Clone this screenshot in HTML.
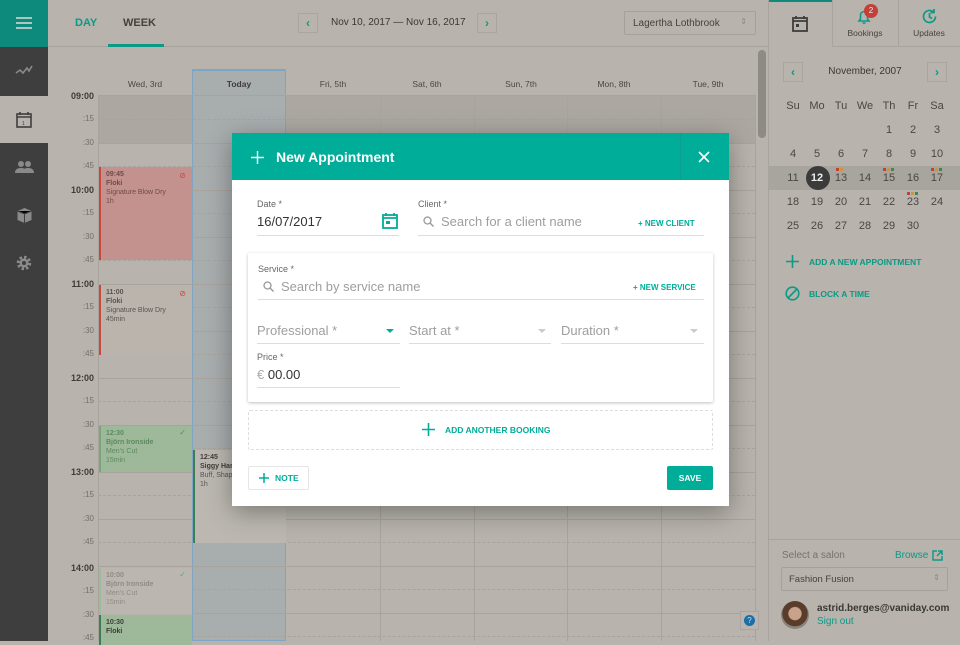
<!DOCTYPE html>
<html><head><meta charset="utf-8"><style>
*{box-sizing:border-box;margin:0;padding:0}
body{width:960px;height:641px;overflow:hidden;background:#b8b3ac;font-family:"Liberation Sans",sans-serif;position:relative;color:#333}
.a{position:absolute}
.hl{position:absolute;left:98px;width:657px;height:0;border-top:1px solid #a8a39d}
.dl{position:absolute;left:98px;width:657px;height:0;border-top:1px dashed #a8a39d}
.vl{position:absolute;top:95px;bottom:0;width:0;border-left:1px solid #a8a39d}
.tl{position:absolute;left:50px;width:44px;text-align:right;font-size:8px;color:#757069;line-height:10px}
.tl.b{font-weight:bold;color:#3f3c38;font-size:9px}
.dh{position:absolute;top:79px;width:94px;text-align:center;font-size:8.5px;color:#4a4743}
.ev{position:absolute;font-size:7px;line-height:9px;padding:3px 5px;color:#6b4c49}
.ev b{display:block}
.cal{position:absolute;width:24px;text-align:center;font-size:11px;color:#4a4743}
.teal{color:#00a993}
.lbl{position:absolute;font-size:9px;color:#666}
.ul{position:absolute;height:0;border-top:1px solid #ddd}
.ph{position:absolute;font-size:13px;color:#9e9e9e}
</style></head><body>
<div class="a" style="left:0;top:0;width:48px;height:641px;background:#3e3e3e"></div>
<div class="a" style="left:0;top:0;width:48px;height:47px;background:#0d8a7b"></div>
<svg class="a" style="left:16px;top:17px" width="16" height="12"><path d="M0 1h16M0 6h16M0 11h16" stroke="#ddd" stroke-width="1.6"/></svg>
<svg class="a" style="left:15px;top:64px" width="19" height="12"><path d="M1 9l4-3 3 3 4-5 2 3 3-5" stroke="#8a8a8a" stroke-width="1.6" fill="none"/></svg>
<div class="a" style="left:0;top:96px;width:48px;height:47px;background:#b8b3ac"></div>
<svg class="a" style="left:16px;top:111px" width="16" height="17"><rect x="1" y="3" width="14" height="13" fill="none" stroke="#3e3e3e" stroke-width="1.6"/><path d="M1 6h14M4 1v3M12 1v3" stroke="#3e3e3e" stroke-width="1.6"/><text x="6" y="14" font-size="5" fill="#3e3e3e">1</text></svg>
<svg class="a" style="left:15px;top:160px" width="19" height="14"><circle cx="6" cy="4" r="3" fill="#8a8a8a"/><circle cx="13" cy="4" r="3" fill="#8a8a8a"/><path d="M0 13c0-4 3-5 6-5s6 1 6 5zM8 13c0-4 2-5 5-5s6 1 6 5z" fill="#8a8a8a"/></svg>
<svg class="a" style="left:16px;top:207px" width="17" height="17"><path d="M8.5 1l7 3v9l-7 3-7-3V4z" fill="#8a8a8a"/><path d="M1.5 4l7 3 7-3M8.5 7v9" stroke="#3e3e3e" stroke-width="1"/></svg>
<svg class="a" style="left:16px;top:255px" width="16" height="16"><circle cx="8" cy="8" r="5.5" fill="none" stroke="#8a8a8a" stroke-width="3.5" stroke-dasharray="2.3 2"/><circle cx="8" cy="8" r="4.5" fill="#8a8a8a"/><circle cx="8" cy="8" r="2" fill="#3e3e3e"/></svg>
<div class="a" style="left:48px;top:0;width:720px;height:47px;border-bottom:1px solid #a8a39d"></div>
<div class="a teal" style="left:75px;top:17px;font-size:11px;font-weight:bold;color:#0c9986">DAY</div>
<div class="a" style="left:123px;top:17px;font-size:11px;font-weight:bold;color:#45423e">WEEK</div>
<div class="a" style="left:108px;top:44px;width:56px;height:3px;background:#0c9986"></div>
<div class="a" style="left:298px;top:13px;width:20px;height:20px;border:1px solid #aaa59f;color:#0c9986;font-size:12px;text-align:center;line-height:18px;font-weight:bold">‹</div>
<div class="a" style="left:331px;top:17px;font-size:10px;color:#3a3835;white-space:nowrap">Nov 10, 2017 — Nov 16, 2017</div>
<div class="a" style="left:477px;top:13px;width:20px;height:20px;border:1px solid #aaa59f;color:#0c9986;font-size:12px;text-align:center;line-height:18px;font-weight:bold">›</div>
<div class="a" style="left:624px;top:11px;width:132px;height:24px;border:1px solid #a4a09a;border-radius:2px;font-size:10px;color:#45423e;padding:6px 8px">Lagertha Lothbrook<span style="position:absolute;right:8px;top:5px;font-size:8px;color:#888">⇕</span></div>
<div class="a" style="left:98px;top:96px;width:657px;height:47px;background:#aca7a1"></div>
<div class="a" style="left:192px;top:69px;width:94px;height:572px;background:#a8adae;border:1px solid #7ea6c4;border-top:2px solid #7ea6c4"></div>
<div class="dh" style="left:98px">Wed, 3rd</div>
<div class="dh" style="left:192px;font-weight:bold;color:#3f3c38">Today</div>
<div class="dh" style="left:286px">Fri, 5th</div>
<div class="dh" style="left:380px">Sat, 6th</div>
<div class="dh" style="left:474px">Sun, 7th</div>
<div class="dh" style="left:567px">Mon, 8th</div>
<div class="dh" style="left:661px">Tue, 9th</div>
<div class="vl" style="left:98px"></div><div class="vl" style="left:380px"></div><div class="vl" style="left:474px"></div><div class="vl" style="left:567px"></div><div class="vl" style="left:661px"></div><div class="vl" style="left:755px"></div>
<div class="hl" style="top:95px"></div><div class="dl" style="top:119px"></div><div class="hl" style="top:143px"></div><div class="dl" style="top:166px"></div>
<div class="hl" style="top:190px"></div><div class="dl" style="top:213px"></div><div class="hl" style="top:237px"></div><div class="dl" style="top:260px"></div>
<div class="hl" style="top:284px"></div><div class="dl" style="top:307px"></div><div class="hl" style="top:331px"></div><div class="dl" style="top:354px"></div>
<div class="hl" style="top:378px"></div><div class="dl" style="top:401px"></div><div class="hl" style="top:425px"></div><div class="dl" style="top:448px"></div>
<div class="hl" style="top:472px"></div><div class="dl" style="top:495px"></div><div class="hl" style="top:519px"></div><div class="dl" style="top:542px"></div>
<div class="hl" style="top:566px"></div><div class="dl" style="top:589px"></div><div class="hl" style="top:613px"></div><div class="dl" style="top:636px"></div>
<div class="tl b" style="top:91px">09:00</div><div class="tl" style="top:114px">:15</div><div class="tl" style="top:138px">:30</div><div class="tl" style="top:161px">:45</div>
<div class="tl b" style="top:185px">10:00</div><div class="tl" style="top:208px">:15</div><div class="tl" style="top:232px">:30</div><div class="tl" style="top:255px">:45</div>
<div class="tl b" style="top:279px">11:00</div><div class="tl" style="top:302px">:15</div><div class="tl" style="top:326px">:30</div><div class="tl" style="top:349px">:45</div>
<div class="tl b" style="top:373px">12:00</div><div class="tl" style="top:396px">:15</div><div class="tl" style="top:420px">:30</div><div class="tl" style="top:443px">:45</div>
<div class="tl b" style="top:467px">13:00</div><div class="tl" style="top:490px">:15</div><div class="tl" style="top:514px">:30</div><div class="tl" style="top:537px">:45</div>
<div class="tl b" style="top:563px">14:00</div><div class="tl" style="top:586px">:15</div><div class="tl" style="top:610px">:30</div><div class="tl" style="top:633px">:45</div>
<div class="ev" style="left:99px;top:167px;width:93px;height:93px;background:#c4928e;border-left:2px solid #c7483f"><b>09:45</b><b>Floki</b>Signature Blow Dry<br>1h<span style="position:absolute;right:6px;top:4px;color:#c7483f;font-size:8px">⊘</span></div>
<div class="ev" style="left:99px;top:285px;width:93px;height:70px;background:#bab4ad;border-left:2px solid #c7483f;color:#5a5450"><b>11:00</b><b>Floki</b>Signature Blow Dry<br>45min<span style="position:absolute;right:6px;top:4px;color:#c7483f;font-size:8px">⊘</span></div>
<div class="ev" style="left:99px;top:426px;width:93px;height:46px;background:#9db99a;border-left:2px solid #7aa57a;color:#5c8a5c"><b>12:30</b><b>Björn Ironside</b>Men's Cut<br>15min<span style="position:absolute;right:6px;top:2px;font-size:8px">✓</span></div>
<div class="ev" style="left:193px;top:450px;width:93px;height:93px;background:#bcb8b1;border-left:2px solid #3d7d56;color:#5a5652"><b style="color:#3f3c38">12:45</b><b style="color:#3f3c38">Siggy Haraldsdottir</b>Buff, Shape<br>1h</div>
<div class="ev" style="left:99px;top:568px;width:93px;height:46px;background:#bbb7b0;border-left:2px solid #9bbb9b;color:#8f8b86"><b>10:00</b><b>Björn Ironside</b>Men's Cut<br>15min<span style="position:absolute;right:6px;top:2px;color:#6a9f6a;font-size:8px">✓</span></div>
<div class="ev" style="left:99px;top:615px;width:93px;height:30px;background:#9db99a;border-left:2px solid #3d7d56;color:#3f3c38"><b>10:30</b><b>Floki</b></div>
<div class="a" style="left:758px;top:50px;width:8px;height:88px;background:#8e8a85;border-radius:4px"></div>
<div class="a" style="left:740px;top:611px;width:19px;height:19px;border:1px solid #aaa59f;background:#bab5ae"><div style="margin:3px;width:11px;height:11px;border-radius:50%;background:#1a6fa8;color:#ddd;font-size:8px;text-align:center;line-height:11px">?</div></div>
<div class="a" style="left:768px;top:0;width:192px;height:641px;border-left:1px solid #a8a39d;background:#b8b3ac"></div>
<div class="a" style="left:769px;top:0;width:63px;height:2px;background:#0d8a7b"></div>
<div class="a" style="left:832px;top:0;width:128px;height:47px;border-left:1px solid #a8a39d;border-bottom:1px solid #a8a39d"></div>
<div class="a" style="left:898px;top:0;width:1px;height:47px;background:#a8a39d"></div>
<svg class="a" style="left:792px;top:15px" width="16" height="17"><rect x="1" y="3" width="14" height="13" fill="none" stroke="#3e3e3e" stroke-width="1.8"/><path d="M1 6h14M4 1v3M12 1v3" stroke="#3e3e3e" stroke-width="1.8"/><rect x="4" y="9" width="3" height="3" fill="#3e3e3e"/></svg>
<svg class="a" style="left:857px;top:9px" width="14" height="16"><path d="M2 12h10l-1.5-2V6a3.5 3.5 0 0 0-7 0v4zM5.5 14h3" stroke="#0c9986" stroke-width="1.6" fill="none"/></svg>
<div class="a" style="left:864px;top:4px;width:14px;height:14px;border-radius:50%;background:#c2403a;color:#eee;font-size:8px;text-align:center;line-height:14px">2</div>
<div class="a" style="left:832px;top:28px;width:66px;text-align:center;font-size:8.5px;color:#45423e">Bookings</div>
<svg class="a" style="left:921px;top:8px" width="17" height="17"><path d="M14.5 8.5a6 6 0 1 1-2-4.5M13 1v3.5H9.5M8.5 5v4l2.5 1.5" stroke="#0c9986" stroke-width="1.7" fill="none"/></svg>
<div class="a" style="left:898px;top:28px;width:62px;text-align:center;font-size:8.5px;color:#45423e">Updates</div>
<div class="a" style="left:783px;top:62px;width:20px;height:20px;border:1px solid #aaa59f;color:#0c9986;text-align:center;line-height:18px;font-weight:bold;font-size:12px">‹</div>
<div class="a" style="left:805px;top:66px;width:120px;text-align:center;font-size:10px;color:#3a3835">November, 2007</div>
<div class="a" style="left:927px;top:62px;width:20px;height:20px;border:1px solid #aaa59f;color:#0c9986;text-align:center;line-height:18px;font-weight:bold;font-size:12px">›</div>
<div class="a" style="left:769px;top:166px;width:191px;height:24px;background:#a8a49e"></div>
<div class="a" style="left:806px;top:166px;width:24px;height:24px;border-radius:50%;background:#3b3b3b"></div>
<div class="a" style="left:781px;top:100px;font-size:11px;color:#6f6b66;word-spacing:0">
<span class="cal" style="left:0">Su</span><span class="cal" style="left:24px">Mo</span><span class="cal" style="left:48px">Tu</span><span class="cal" style="left:72px">We</span><span class="cal" style="left:96px">Th</span><span class="cal" style="left:120px">Fr</span><span class="cal" style="left:144px">Sa</span>
</div>
<div class="a" style="left:781px;top:124px;width:170px;height:120px">
<span class="cal" style="left:96px;top:0">1</span><span class="cal" style="left:120px;top:0">2</span><span class="cal" style="left:144px;top:0">3</span>
<span class="cal" style="left:0;top:24px">4</span><span class="cal" style="left:24px;top:24px">5</span><span class="cal" style="left:48px;top:24px">6</span><span class="cal" style="left:72px;top:24px">7</span><span class="cal" style="left:96px;top:24px">8</span><span class="cal" style="left:120px;top:24px">9</span><span class="cal" style="left:144px;top:24px">10</span>
<span class="cal" style="left:0;top:48px">11</span><span class="cal" style="left:24px;top:48px;color:#eee;font-weight:bold">12</span><span class="cal" style="left:48px;top:48px">13</span><span class="cal" style="left:72px;top:48px">14</span><span class="cal" style="left:96px;top:48px">15</span><span class="cal" style="left:120px;top:48px">16</span><span class="cal" style="left:144px;top:48px">17</span>
<span class="cal" style="left:0;top:72px">18</span><span class="cal" style="left:24px;top:72px">19</span><span class="cal" style="left:48px;top:72px">20</span><span class="cal" style="left:72px;top:72px">21</span><span class="cal" style="left:96px;top:72px">22</span><span class="cal" style="left:120px;top:72px">23</span><span class="cal" style="left:144px;top:72px">24</span>
<span class="cal" style="left:0;top:96px">25</span><span class="cal" style="left:24px;top:96px">26</span><span class="cal" style="left:48px;top:96px">27</span><span class="cal" style="left:72px;top:96px">28</span><span class="cal" style="left:96px;top:96px">29</span><span class="cal" style="left:120px;top:96px">30</span>
</div>
<svg class="a" style="left:836px;top:168px" width="10" height="3"><rect width="3" height="3" fill="#c2403a"/><rect x="4" width="3" height="3" fill="#c9973a"/></svg>
<svg class="a" style="left:883px;top:168px" width="12" height="3"><rect width="3" height="3" fill="#c2403a"/><rect x="4" width="3" height="3" fill="#c9973a"/><rect x="8" width="3" height="3" fill="#3c8a4a"/></svg>
<svg class="a" style="left:931px;top:168px" width="12" height="3"><rect width="3" height="3" fill="#c2403a"/><rect x="4" width="3" height="3" fill="#c9973a"/><rect x="8" width="3" height="3" fill="#3c8a4a"/></svg>
<svg class="a" style="left:907px;top:192px" width="12" height="3"><rect width="3" height="3" fill="#c2403a"/><rect x="4" width="3" height="3" fill="#c9973a"/><rect x="8" width="3" height="3" fill="#3c8a4a"/></svg>
<svg class="a" style="left:786px;top:255px" width="13" height="13"><path d="M6.5 0v13M0 6.5h13" stroke="#0c9986" stroke-width="1.6"/></svg>
<div class="a" style="left:809px;top:257px;font-size:8.5px;font-weight:bold;color:#0c9986">ADD A NEW APPOINTMENT</div>
<svg class="a" style="left:785px;top:286px" width="15" height="15"><circle cx="7.5" cy="7.5" r="6.3" fill="none" stroke="#0c9986" stroke-width="1.6"/><path d="M3 12L12 3" stroke="#0c9986" stroke-width="1.6"/></svg>
<div class="a" style="left:809px;top:289px;font-size:8.5px;font-weight:bold;color:#0c9986">BLOCK A TIME</div>
<div class="a" style="left:769px;top:539px;width:191px;height:1px;background:#a8a39d"></div>
<div class="a" style="left:782px;top:550px;font-size:10px;color:#77726c">Select a salon</div>
<div class="a" style="left:895px;top:550px;font-size:10px;color:#0c9986">Browse</div>
<svg class="a" style="left:932px;top:550px" width="11" height="11"><path d="M5 1H1v9h9V6M6 1h4v4M10 1L5 6" stroke="#0c9986" stroke-width="1.4" fill="none"/></svg>
<div class="a" style="left:781px;top:567px;width:167px;height:24px;border:1px solid #a4a09a;border-radius:2px;font-size:9.5px;color:#45423e;padding:6px 7px">Fashion Fusion<span style="position:absolute;right:7px;top:5px;font-size:8px;color:#888">⇕</span></div>
<div class="a" style="left:781px;top:601px;width:28px;height:28px;border-radius:50%;background:radial-gradient(circle at 50% 45%,#c8a28a 0 30%,#5a3c2a 34% 60%,#8a847c 62%)"></div>
<div class="a" style="left:817px;top:603px;font-size:10px;color:#3a3835;font-weight:bold">astrid.berges@vaniday.com</div>
<div class="a" style="left:817px;top:616px;font-size:10px;color:#0c9986">Sign out</div>
<div class="a" style="left:232px;top:133px;width:497px;height:373px;background:#fff;box-shadow:0 6px 24px rgba(0,0,0,.35)"></div>
<div class="a" style="left:232px;top:133px;width:497px;height:47px;background:#00ad98"></div>
<div class="a" style="left:680px;top:133px;width:1px;height:47px;background:#0aa08d"></div>
<svg class="a" style="left:251px;top:151px" width="13" height="13"><path d="M6.5 0v13M0 6.5h13" stroke="#e8fffb" stroke-width="1.4"/></svg>
<div class="a" style="left:276px;top:149px;font-size:14px;color:#fff;font-weight:bold">New Appointment</div>
<svg class="a" style="left:698px;top:151px" width="12" height="12"><path d="M1 1l10 10M11 1L1 11" stroke="#fff" stroke-width="1.6"/></svg>
<div class="lbl" style="left:257px;top:199px">Date *</div>
<div class="a" style="left:257px;top:214px;font-size:13px;color:#333">16/07/2017</div>
<svg class="a" style="left:382px;top:212px" width="16" height="17"><rect x="1" y="3" width="14" height="13" fill="none" stroke="#00ad98" stroke-width="1.8"/><path d="M1 6h14M4 1v3M12 1v3" stroke="#00ad98" stroke-width="1.8"/><rect x="4" y="9" width="4" height="3" fill="#00ad98"/></svg>
<div class="ul" style="left:257px;top:235px;width:142px"></div>
<div class="lbl" style="left:418px;top:199px">Client *</div>
<svg class="a" style="left:423px;top:216px" width="11" height="11"><circle cx="4.5" cy="4.5" r="3.5" fill="none" stroke="#999" stroke-width="1.3"/><path d="M7 7l3.5 3.5" stroke="#999" stroke-width="1.4"/></svg>
<div class="ph" style="left:441px;top:214px">Search for a client name</div>
<div class="a" style="left:638px;top:219px;font-size:8px;font-weight:bold;color:#00ad98">+ NEW CLIENT</div>
<div class="ul" style="left:418px;top:235px;width:286px"></div>
<div class="a" style="left:248px;top:253px;width:465px;height:149px;border-radius:2px;box-shadow:0 1px 3px rgba(0,0,0,.25)"></div>
<div class="lbl" style="left:258px;top:264px">Service *</div>
<svg class="a" style="left:263px;top:281px" width="11" height="11"><circle cx="4.5" cy="4.5" r="3.5" fill="none" stroke="#999" stroke-width="1.3"/><path d="M7 7l3.5 3.5" stroke="#999" stroke-width="1.4"/></svg>
<div class="ph" style="left:281px;top:279px">Search by service name</div>
<div class="a" style="left:633px;top:283px;font-size:8px;font-weight:bold;color:#00ad98">+ NEW SERVICE</div>
<div class="ul" style="left:258px;top:299px;width:446px"></div>
<div class="ph" style="left:257px;top:323px">Professional *</div>
<div class="a" style="left:386px;top:329px;width:0;height:0;border:4px solid transparent;border-top:4px solid #00ad98"></div>
<div class="ul" style="left:257px;top:343px;width:143px"></div>
<div class="ph" style="left:409px;top:323px">Start at *</div>
<div class="a" style="left:538px;top:329px;border:4px solid transparent;border-top:4px solid #ccc"></div>
<div class="ul" style="left:409px;top:343px;width:142px"></div>
<div class="ph" style="left:561px;top:323px">Duration *</div>
<div class="a" style="left:690px;top:329px;border:4px solid transparent;border-top:4px solid #ccc"></div>
<div class="ul" style="left:561px;top:343px;width:143px"></div>
<div class="lbl" style="left:257px;top:352px">Price *</div>
<div class="a" style="left:257px;top:367px;font-size:13px;color:#333"><span style="color:#aaa">€</span> 00.00</div>
<div class="ul" style="left:257px;top:387px;width:143px"></div>
<div class="a" style="left:248px;top:410px;width:465px;height:40px;border:1px dashed #ddd;border-radius:2px"></div>
<svg class="a" style="left:422px;top:423px" width="13" height="13"><path d="M6.5 0v13M0 6.5h13" stroke="#00ad98" stroke-width="1.6"/></svg>
<div class="a" style="left:445px;top:425px;font-size:8.5px;font-weight:bold;color:#00ad98">ADD ANOTHER BOOKING</div>
<div class="a" style="left:248px;top:466px;width:61px;height:24px;border:1px solid #e6e6e6;border-radius:2px"></div>
<svg class="a" style="left:259px;top:473px" width="10" height="10"><path d="M5 0v10M0 5h10" stroke="#00ad98" stroke-width="1.5"/></svg>
<div class="a" style="left:275px;top:473px;font-size:8.5px;font-weight:bold;color:#00ad98">NOTE</div>
<div class="a" style="left:667px;top:466px;width:46px;height:24px;background:#00ad98;border-radius:2px;color:#fff;font-size:8.5px;font-weight:bold;text-align:center;line-height:24px">SAVE</div>
</body></html>
